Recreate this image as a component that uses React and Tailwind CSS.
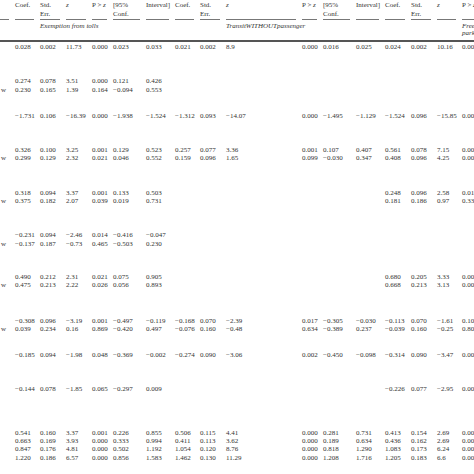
const COLS = [
  'w-[15px]', 'w-[25px]', 'w-[26px]', 'w-[26px]', 'w-[21px]', 'w-[33px]', 'w-[29px]', 'w-[25px]', 'w-[26px]',
  'w-[76px]', 'w-[21px]', 'w-[33px]', 'w-[29px]', 'w-[26px]', 'w-[26px]', 'w-[25px]', 'w-[30px]',
];

const HEADERS = [
  ['Coef.'], ['Std.', 'Err.'], ['z'], ['P > z'], ['[95%', 'Conf.'], ['Interval]'],
  ['Coef.'], ['Std.', 'Err.'], ['z'], ['P > z'], ['[95%', 'Conf.'], ['Interval]'],
  ['Coef.'], ['Std.', 'Err.'], ['z'], ['P > z'],
];

// "_" marks an empty cell
const GROUPS = [
  { gap: 'pt-[1px]', rows: [['', '0.028 0.002 11.73 0.000 0.023 0.033 0.021 0.002 8.9 0.000 0.016 0.025 0.024 0.002 10.16 0.000']] },
  {
    gap: 'pt-[26px]',
    rows: [
      ['', '0.274 0.078 3.51 0.000 0.121 0.426'],
      ['w', '0.230 0.165 1.39 0.164 −0.094 0.553'],
    ],
  },
  { gap: 'pt-[18px]', rows: [['', '−1.731 0.106 −16.39 0.000 −1.938 −1.524 −1.312 0.093 −14.07 0.000 −1.495 −1.129 −1.524 0.096 −15.85 0.000']] },
  {
    gap: 'pt-[26px]',
    rows: [
      ['', '0.326 0.100 3.25 0.001 0.129 0.523 0.257 0.077 3.36 0.001 0.107 0.407 0.561 0.078 7.15 0.000'],
      ['w', '0.299 0.129 2.32 0.021 0.046 0.552 0.159 0.096 1.65 0.099 −0.030 0.347 0.408 0.096 4.25 0.000'],
    ],
  },
  {
    gap: 'pt-[26px]',
    rows: [
      ['', '0.318 0.094 3.37 0.001 0.133 0.503 _ _ _ _ _ _ 0.248 0.096 2.58 0.010'],
      ['w', '0.375 0.182 2.07 0.039 0.019 0.731 _ _ _ _ _ _ 0.181 0.186 0.97 0.332'],
    ],
  },
  {
    gap: 'pt-[26px]',
    rows: [
      ['', '−0.231 0.094 −2.46 0.014 −0.416 −0.047'],
      ['w', '−0.137 0.187 −0.73 0.465 −0.503 0.230'],
    ],
  },
  {
    gap: 'pt-[25px]',
    rows: [
      ['', '0.490 0.212 2.31 0.021 0.075 0.905 _ _ _ _ _ _ 0.680 0.205 3.33 0.001'],
      ['w', '0.475 0.213 2.22 0.026 0.056 0.893 _ _ _ _ _ _ 0.668 0.213 3.13 0.002'],
    ],
  },
  {
    gap: 'pt-[27px]',
    rows: [
      ['', '−0.308 0.096 −3.19 0.001 −0.497 −0.119 −0.168 0.070 −2.39 0.017 −0.305 −0.030 −0.113 0.070 −1.61 0.107'],
      ['w', '0.039 0.234 0.16 0.869 −0.420 0.497 −0.076 0.160 −0.48 0.634 −0.389 0.237 −0.039 0.160 −0.25 0.805'],
    ],
  },
  { gap: 'pt-[18px]', rows: [['', '−0.185 0.094 −1.98 0.048 −0.369 −0.002 −0.274 0.090 −3.06 0.002 −0.450 −0.098 −0.314 0.090 −3.47 0.001']] },
  { gap: 'pt-[26px]', rows: [['', '−0.144 0.078 −1.85 0.065 −0.297 0.009 _ _ _ _ _ _ −0.226 0.077 −2.95 0.003']] },
  {
    gap: 'pt-[35px]',
    rows: [
      ['', '0.541 0.160 3.37 0.001 0.226 0.855 0.506 0.115 4.41 0.000 0.281 0.731 0.413 0.154 2.69 0.007'],
      ['', '0.663 0.169 3.93 0.000 0.333 0.994 0.411 0.113 3.62 0.000 0.189 0.634 0.436 0.162 2.69 0.007'],
      ['', '0.847 0.176 4.81 0.000 0.502 1.192 1.054 0.120 8.76 0.000 0.818 1.290 1.083 0.173 6.24 0.000'],
      ['', '1.220 0.186 6.57 0.000 0.856 1.583 1.462 0.130 11.29 0.000 1.208 1.716 1.205 0.183 6.6 0.000'],
    ],
  },
];

function HeaderCell({ lines, col }) {
  return (
    <div className={`${col} shrink-0 pr-[6px]`}>
      <div className="h-[20px] border-b border-[#777] pt-[1px] leading-[8.5px]">
        {lines.map((line) => (
          <div key={line}>{line === 'z' ? <i>z</i> : line === 'P > z' ? <>P &gt; <i>z</i></> : line}</div>
        ))}
      </div>
    </div>
  );
}

function DataRow({ label, values }) {
  const cells = values.split(' ');
  return (
    <div className="flex h-[8.3px] leading-[8.3px] whitespace-nowrap">
      <div className={`${COLS[0]} shrink-0 pl-[1px]`}>{label}</div>
      {COLS.slice(1).map((col, i) => (
        <div key={i} className={`${col} shrink-0`}>
          {cells[i] && cells[i] !== '_' ? cells[i] : ''}
        </div>
      ))}
    </div>
  );
}

export default function App() {
  return (
    <div className="h-[474px] w-[474px] overflow-hidden bg-white font-['Liberation_Serif',serif] text-[7px] text-[#333]">
      <div className="flex">
        <HeaderCell lines={[]} col={COLS[0]} />
        {HEADERS.map((lines, i) => (
          <HeaderCell key={i} lines={lines} col={COLS[i + 1]} />
        ))}
      </div>

      <div className="flex h-[22px] border-b-2 border-[#555] pt-[2.5px] italic leading-[7.5px] whitespace-nowrap">
        <div className="w-[40px] shrink-0" />
        <div className="w-[186px] shrink-0">Exemption from tolls</div>
        <div className="w-[236px] shrink-0">TransitWITHOUTpassenger</div>
        <div className="w-[30px] shrink-0 whitespace-normal">Free parking</div>
      </div>

      {GROUPS.map((group, gi) => (
        <div key={gi} className={group.gap}>
          {group.rows.map(([label, values], ri) => (
            <DataRow key={ri} label={label} values={values} />
          ))}
        </div>
      ))}
    </div>
  );
}
